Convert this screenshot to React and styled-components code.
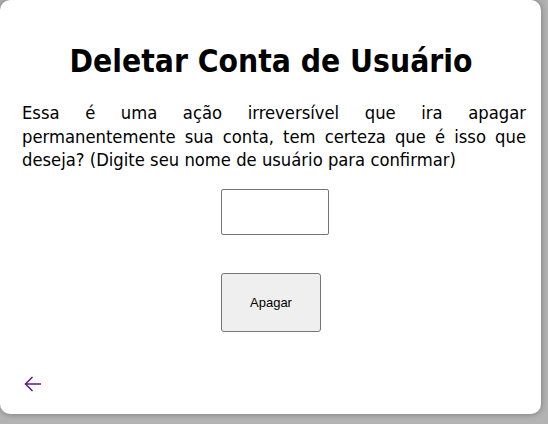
import React from "react";
import styled, { createGlobalStyle } from "styled-components";

const Global = createGlobalStyle`
  html, body { margin: 0; padding: 0; background: #b3b3b3; }
  body { width: 548px; height: 424px; overflow: hidden; font-family: "DejaVu Sans", sans-serif; }
`;

const Card = styled.div`
  box-sizing: border-box;
  width: 541px;
  height: 414px;
  background: #fff;
  border-radius: 10px;
  box-shadow: 0 0 6px rgba(0, 0, 0, 0.35);
  padding: 0 15px 0 22px;
  display: flex;
  flex-direction: column;
`;

const Title = styled.h1`
  margin: 43px 6px 0 0;
  font-family: "DejaVu Sans", sans-serif;
  font-stretch: condensed;
  font-weight: bold;
  font-size: 31.5px;
  line-height: 36px;
  text-align: center;
  color: #000;
`;

const Text = styled.p`
  margin: 22px 0 0;
  font-family: "DejaVu Sans", sans-serif;
  font-stretch: condensed;
  font-size: 18.25px;
  line-height: 23.5px;
  text-align: justify;
  color: #000;
`;

const Form = styled.div`
  display: flex;
  flex-direction: column;
  align-items: center;
  margin-top: 17px;
`;

const Input = styled.input`
  box-sizing: border-box;
  width: 108px;
  height: 46px;
  border: 1px solid #767676;
  border-radius: 2px;
  background: #fff;
  margin-left: 2px;
`;

const Button = styled.button`
  box-sizing: border-box;
  width: 100px;
  height: 59px;
  margin-top: 38px;
  margin-right: 6px;
  background: #efefef;
  border: 1px solid #767676;
  border-radius: 3px;
  font-family: "Liberation Sans", Arial, sans-serif;
  font-size: 13px;
  color: #000;
`;

const Back = styled.a`
  display: block;
  width: 18px;
  height: 16px;
  margin-top: 44px;
  margin-left: 2px;
  color: #551a8b;
`;

export default function App() {
  return (
    <>
      <Global />
      <Card>
        <Title>Deletar Conta de Usuário</Title>
        <Text>
          Essa é uma ação irreversível que ira apagar permanentemente sua conta, tem certeza que é isso que
          deseja? (Digite seu nome de usuário para confirmar)
        </Text>
        <Form>
          <Input type="text" />
          <Button>Apagar</Button>
        </Form>
        <Back href="#">
          <svg width="18" height="16" viewBox="0 0 18 16" fill="none" stroke="currentColor" strokeWidth="1.5">
            <polyline points="8.5,1 1.5,8 8.5,15" />
            <line x1="1.5" y1="8" x2="17" y2="8" />
          </svg>
        </Back>
      </Card>
    </>
  );
}
